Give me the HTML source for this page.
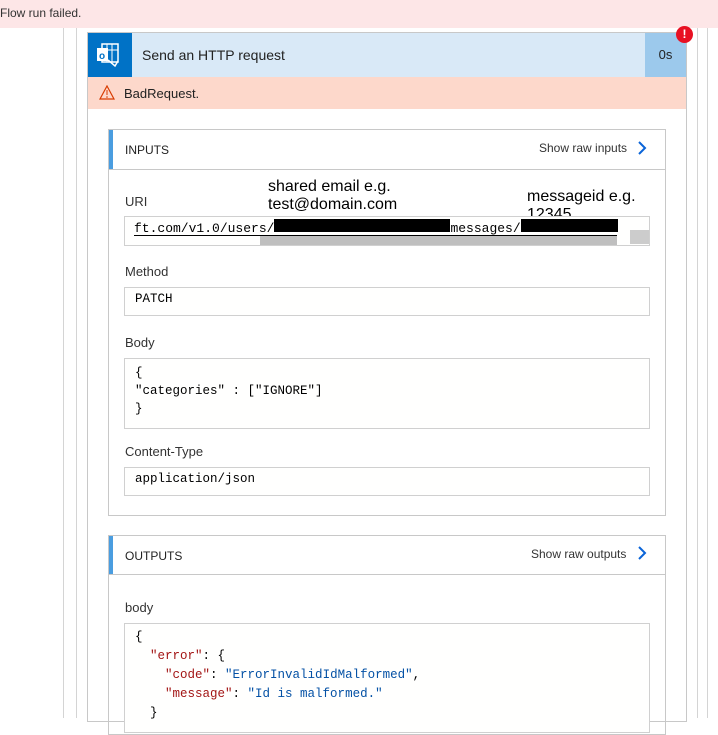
<!DOCTYPE html>
<html><head><style>
body{margin:0;width:718px;height:718px;overflow:hidden;background:#fff;font-family:"Liberation Sans",sans-serif;position:relative;color:#333}
div{position:absolute;box-sizing:border-box}
.lbl{font-size:13px;color:#333}
.box{border:1px solid #d0d0d0;background:#fffffe;font-family:"Liberation Mono",monospace;font-size:12.5px;color:#000}
.v{width:1px;background:#d4d4d4;top:28px;height:690px}
</style></head><body>
<div style="left:0;top:0;width:718px;height:28px;background:#fde6e7;font-size:12px;line-height:26px;color:#333">Flow run failed.</div>
<div class="v" style="left:63px"></div>
<div class="v" style="left:76px"></div>
<div class="v" style="left:697px"></div>
<div class="v" style="left:707px"></div>
<div style="left:87px;top:32px;width:600px;height:690px;border:1px solid #c8c8c8;background:#fff"></div>
<div style="left:88px;top:33px;width:598px;height:44px;background:#d9e9f7"></div>
<div style="left:88px;top:33px;width:44px;height:44px;background:#0072c6">
<svg width="44" height="44"><rect x="14" y="11" width="16" height="18" fill="none" stroke="#fff" stroke-width="1.5"/><line x1="19" y1="11" x2="19" y2="29" stroke="#fff"/><line x1="24" y1="11" x2="24" y2="29" stroke="#fff"/><line x1="14" y1="17" x2="30" y2="17" stroke="#fff"/><rect x="9" y="15" width="11" height="13" fill="#fff"/><text x="11" y="26" font-size="10" font-weight="bold" fill="#0072c6" font-family="Liberation Sans">o</text><path d="M20 27 L27 33 L30 28" fill="none" stroke="#fff" stroke-width="1.5"/></svg></div>
<div style="left:142px;top:33px;line-height:44px;font-size:14px;color:#222">Send an HTTP request</div>
<div style="left:645px;top:33px;width:41px;height:44px;background:#9cc9ec;line-height:44px;text-align:center;font-size:13px;color:#222">0s</div>
<div style="left:676px;top:26px;width:17px;height:17px;border-radius:50%;background:#e81123;color:#fff;font-size:12px;font-weight:bold;text-align:center;line-height:17px">!</div>
<div style="left:88px;top:77px;width:598px;height:32px;background:#fdd8cb"></div>
<svg style="position:absolute;left:99px;top:85px" width="16" height="15"><path d="M8 1 L15 14 L1 14 Z" fill="none" stroke="#d83b01" stroke-width="1.2"/><line x1="8" y1="5" x2="8" y2="10" stroke="#d83b01"/><circle cx="8" cy="12" r=".8" fill="#d83b01"/></svg>
<div style="left:124px;top:86px;font-size:13px;color:#222">BadRequest.</div>

<div style="left:108px;top:129px;width:558px;height:387px;border:1px solid #c8c8c8"></div>
<div style="left:109px;top:130px;width:4px;height:39px;background:#4a9de0"></div>
<div style="left:109px;top:169px;width:556px;height:1px;background:#c8c8c8"></div>
<div style="left:125px;top:143px;font-size:12px;color:#222">INPUTS</div>
<div style="left:539px;top:141px;font-size:12px;color:#333">Show raw inputs</div>
<svg style="position:absolute;left:636px;top:140px" width="12" height="16"><path d="M3 2 L9 8 L3 14" fill="none" stroke="#0a64d8" stroke-width="2"/></svg>
<div class="lbl" style="left:125px;top:194px">URI</div>
<div style="left:268px;top:178px;font-size:16px;color:#000;line-height:18px">shared email e.g.<br>test@domain.com</div>
<div style="left:527px;top:188px;font-size:16px;color:#000;line-height:18px">messageid e.g.<br>12345</div>
<div class="box" style="left:124px;top:216px;width:526px;height:30px;overflow:hidden"></div>
<div style="left:134px;top:219px;font-family:'Liberation Mono',monospace;font-size:13px;color:#000">ft.com/v1.0/users/<span style="display:inline-block;width:176px;height:13px;background:#000"></span>messages/<span style="display:inline-block;width:97px;height:13px;background:#000"></span></div>
<div style="left:134px;top:235px;width:483px;height:1px;background:#000"></div>
<div style="left:260px;top:236px;width:357px;height:9px;background:#bfbfbf"></div>
<div style="left:630px;top:230px;width:19px;height:14px;background:#ccc"></div>
<div class="lbl" style="left:125px;top:264px">Method</div>
<div class="box" style="left:124px;top:287px;width:526px;height:29px;padding:4px 10px">PATCH</div>
<div class="lbl" style="left:125px;top:335px">Body</div>
<div class="box" style="left:124px;top:358px;width:526px;height:71px;padding:5px 10px;line-height:18px">{<br>"categories" : ["IGNORE"]<br>}</div>
<div class="lbl" style="left:125px;top:444px">Content-Type</div>
<div class="box" style="left:124px;top:467px;width:526px;height:29px;padding:4px 10px">application/json</div>

<div style="left:108px;top:535px;width:558px;height:200px;border:1px solid #c8c8c8"></div>
<div style="left:109px;top:536px;width:4px;height:38px;background:#4a9de0"></div>
<div style="left:109px;top:574px;width:556px;height:1px;background:#c8c8c8"></div>
<div style="left:125px;top:549px;font-size:12px;color:#222">OUTPUTS</div>
<div style="left:531px;top:547px;font-size:12px;color:#333">Show raw outputs</div>
<svg style="position:absolute;left:636px;top:545px" width="12" height="16"><path d="M3 2 L9 8 L3 14" fill="none" stroke="#0a64d8" stroke-width="2"/></svg>
<div class="lbl" style="left:125px;top:600px">body</div>
<div class="box" style="left:124px;top:623px;width:526px;height:110px;padding:4px 10px;line-height:19px;white-space:pre">{
  <span style="color:#a31515">"error"</span>: {
    <span style="color:#a31515">"code"</span>: <span style="color:#0451a5">"ErrorInvalidIdMalformed"</span>,
    <span style="color:#a31515">"message"</span>: <span style="color:#0451a5">"Id is malformed."</span>
  }</div>
</body></html>
